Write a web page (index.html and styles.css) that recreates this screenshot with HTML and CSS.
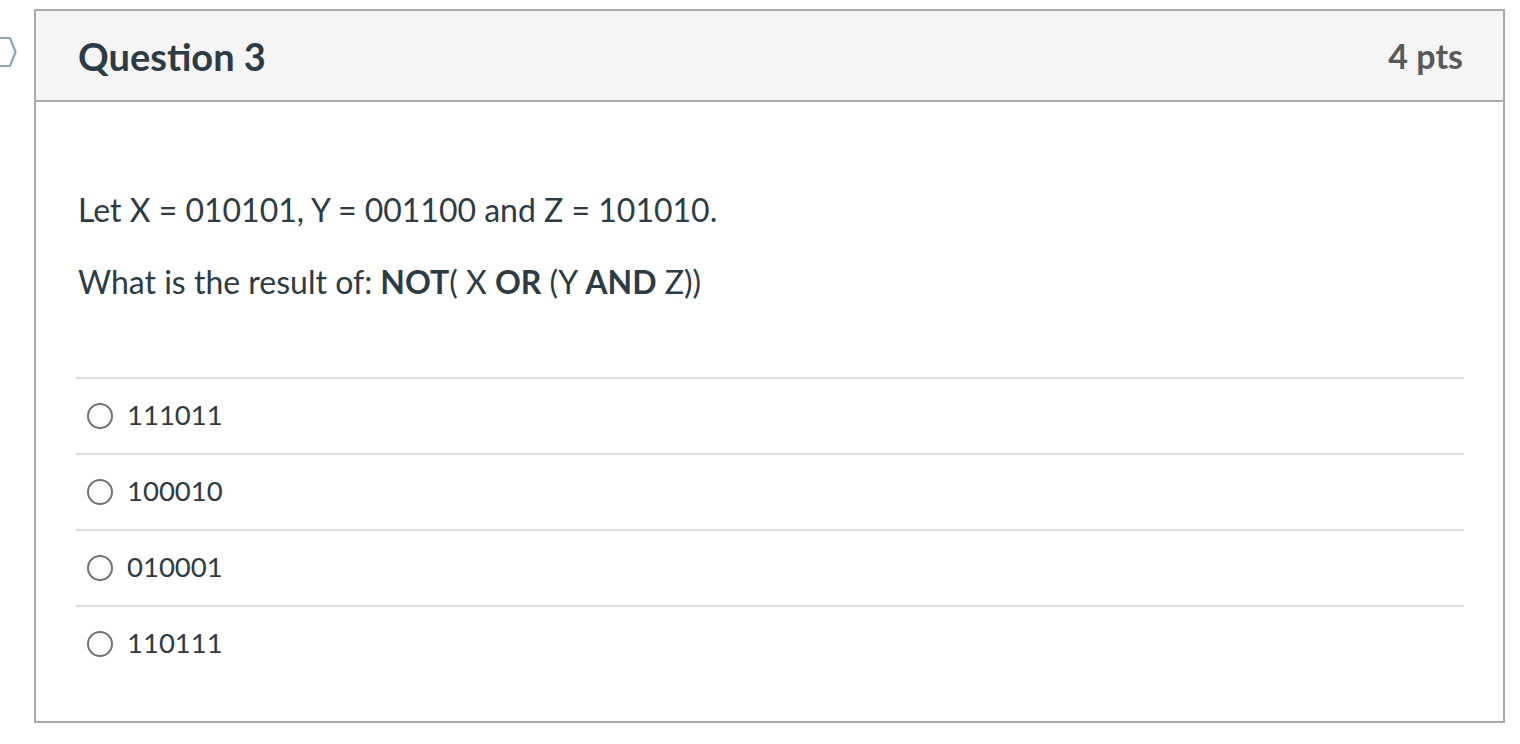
FILE: index.html
```html
<!DOCTYPE html>
<html>
<head>
<meta charset="utf-8">
<link rel="stylesheet" href="styles.css">
</head>
<body>
<div class="page">
  <svg class="flag" width="20" height="36" viewBox="0 0 20 36">
    <path d="M-6 6 H10 L15.5 20 L10 34 H-6" fill="none" stroke="#8fa6b9" stroke-width="2.2" stroke-linejoin="round"/>
  </svg>
  <div class="question">
    <div class="q-header">
      <h2 class="q-title">Question 3</h2>
      <span class="q-points">4 pts</span>
    </div>
    <div class="q-body">
      <div class="q-text">
        <p>Let X = 010101, Y = 001100 and Z = 101010.</p>
        <p>What is the result of: <strong>NOT</strong>( X <strong>OR</strong> (Y <strong>AND</strong> Z))</p>
      </div>
      <div class="answers">
        <label class="answer"><span class="radio"></span><span class="answer-text">111011</span></label>
        <label class="answer"><span class="radio"></span><span class="answer-text">100010</span></label>
        <label class="answer"><span class="radio"></span><span class="answer-text">010001</span></label>
        <label class="answer"><span class="radio"></span><span class="answer-text">110111</span></label>
      </div>
    </div>
  </div>
</div>
</body>
</html>
```
FILE: styles.css
```css
html, body {
  margin: 0;
  padding: 0;
  background: #fff;
}
body {
  font-family: Lato, "Open Sans", sans-serif;
  color: #2d3b45;
  overflow: hidden;
}
.page {
  position: relative;
  padding: 9px 15px 0 34px;
}
.flag {
  position: absolute;
  left: 0;
  top: 32px;
}
.question {
  border: 2px solid #aaaaaa;
  display: flex;
  flex-direction: column;
}
.q-header {
  background: #f5f5f5;
  border-bottom: 2px solid #aaaaaa;
  height: 89px;
  display: flex;
  align-items: center;
  justify-content: space-between;
  padding: 0 40px 0 42px;
}
.q-title {
  margin: 0;
  font-size: 38px;
  line-height: 48px;
  font-weight: 700;
  color: #2d3b45;
}
.q-points {
  font-size: 34px;
  line-height: 48px;
  font-weight: 700;
  color: #58595b;
}
.q-body {
  padding: 0 39px 40px 40px;
}
.q-text {
  padding: 84px 0 71px 2px;
}
.q-text p {
  margin: 0;
  font-size: 32px;
  line-height: 48px;
}
.q-text p + p {
  margin-top: 24px;
}
.q-text strong {
  font-weight: 700;
}
.answers {
  display: flex;
  flex-direction: column;
}
.answer {
  display: flex;
  align-items: center;
  height: 74px;
  border-top: 2px solid #dddddd;
  padding: 0 0 3px 11px;
  box-sizing: border-box;
  height: 76px;
}
.radio {
  width: 26px;
  height: 26px;
  border: 2px solid #737373;
  border-radius: 50%;
  box-sizing: border-box;
  margin-right: 14px;
  flex: none;
  position: relative;
  top: 1px;
}
.answer-text {
  font-size: 27.5px;
}
```
